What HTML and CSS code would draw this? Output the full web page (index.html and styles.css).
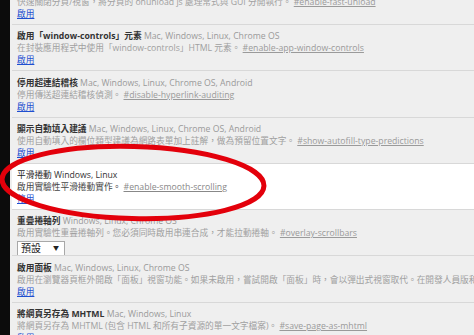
FILE: index.html
```html
<!DOCTYPE html>
<html lang="zh-Hant">
<head>
<meta charset="utf-8">
<link rel="stylesheet" href="styles.css">
</head>
<body>
<div class="page">
  <div class="strip"></div>
  <div class="list">
    <div class="exp">
      <div class="title"><span class="name">快速關閉分頁/視窗</span> <span class="plat">Mac, Windows, Linux, Chrome OS</span></div>
      <div class="desc">快速關閉分頁/視窗，將分頁的 onunload js 處理常式與 GUI 分開執行。 <a class="perm">#enable-fast-unload</a></div>
      <div class="act"><a class="link">啟用</a></div>
    </div>
    <div class="exp">
      <div class="title"><span class="name">啟用「window-controls」元素</span> <span class="plat">Mac, Windows, Linux, Chrome OS</span></div>
      <div class="desc">在封裝應用程式中使用「window-controls」HTML 元素。 <a class="perm">#enable-app-window-controls</a></div>
      <div class="act"><a class="link">啟用</a></div>
    </div>
    <div class="exp">
      <div class="title"><span class="name">停用超連結稽核</span> <span class="plat">Mac, Windows, Linux, Chrome OS, Android</span></div>
      <div class="desc">停用傳送超連結稽核偵測。 <a class="perm">#disable-hyperlink-auditing</a></div>
      <div class="act"><a class="link">啟用</a></div>
    </div>
    <div class="exp">
      <div class="title"><span class="name">顯示自動填入建議</span> <span class="plat">Mac, Windows, Linux, Chrome OS, Android</span></div>
      <div class="desc">使用自動填入的欄位類型建議為網路表單加上註解，做為預留位置文字。 <a class="perm">#show-autofill-type-predictions</a></div>
      <div class="act"><a class="link">啟用</a></div>
    </div>
    <div class="exp supported">
      <div class="title"><span class="name">平滑捲動</span> <span class="plat">Windows, Linux</span></div>
      <div class="desc">啟用實驗性平滑捲動實作。 <a class="perm">#enable-smooth-scrolling</a></div>
      <div class="act"><a class="link">停用</a></div>
    </div>
    <div class="exp">
      <div class="title"><span class="name">重疊捲軸列</span> <span class="plat">Windows, Linux, Chrome OS</span></div>
      <div class="desc">啟用實驗性重疊捲軸列。您必須同時啟用串連合成，才能拉動捲軸。 <a class="perm">#overlay-scrollbars</a></div>
      <div class="act"><span class="select"><span>預設</span><span class="arrow">▼</span></span></div>
    </div>
    <div class="exp">
      <div class="title"><span class="name">啟用面板</span> <span class="plat">Mac, Windows, Linux, Chrome OS</span></div>
      <div class="desc">啟用在瀏覽器頁框外開啟「面板」視窗功能。如果未啟用，嘗試開啟「面板」時，會以彈出式視窗取代。在開發人員版和測試版中，一律啟用「面板」。 <a class="perm">#enable-panels</a></div>
      <div class="act"><a class="link">啟用</a></div>
    </div>
    <div class="exp">
      <div class="title"><span class="name">將網頁另存為 MHTML</span> <span class="plat">Mac, Windows, Linux</span></div>
      <div class="desc">將網頁另存為 MHTML (包含 HTML 和所有子資源的單一文字檔案)。 <a class="perm">#save-page-as-mhtml</a></div>
      <div class="act"><a class="link">啟用</a></div>
    </div>
  </div>
</div>
<svg class="ring" width="474" height="335" viewBox="0 0 474 335">
  <ellipse cx="133" cy="182.5" rx="131" ry="36" transform="rotate(1.5 133 182.5)" fill="none" stroke="#e3000b" stroke-width="5"/>
</svg>
</body>
</html>
```

FILE: styles.css
```css
html, body {
  margin: 0;
  padding: 0;
  height: 100%;
  overflow: hidden;
}
body {
  background: #efefef;
  font-family: "Open Sans", "Noto Sans CJK TC", sans-serif;
  font-size: 8.7px;
  line-height: 12px;
  color: #333;
  position: relative;
}
.page {
  display: flex;
  height: 100%;
}
.strip {
  width: 10px;
  flex: none;
  background: #0c0c0c;
}
.list {
  flex: 1;
  margin-left: 2px;
  margin-top: -21.3px;
  overflow: hidden;
}
.exp {
  border-bottom: 1px solid #d8d8d8;
  padding: 5.3px 0 4px 5px;
  white-space: nowrap;
  overflow: hidden;
}
.exp.supported {
  background: #ffffff;
}
.title, .desc, .act {
  height: 12px;
}
.name {
  font-weight: bold;
  color: #333;
}
.plat {
  color: #9a9a9a;
}
.desc {
  color: #a0a0a0;
}
.perm {
  color: #9a9a9a;
  text-decoration: underline;
}
.link {
  color: #1f4fd0;
  text-decoration: underline;
}
.supported .name {
  font-weight: normal;
  color: #222;
}
.supported .plat {
  color: #333;
}
.supported .desc {
  color: #444;
}
.supported .perm {
  color: #888;
}
.act {
  display: flex;
  align-items: center;
}
.select {
  display: inline-flex;
  align-items: center;
  justify-content: space-between;
  box-sizing: border-box;
  width: 48px;
  height: 15px;
  margin-top: 6px;
  padding: 0 5px 0 3px;
  background: #fff;
  border: 1px solid #a8a8a8;
  color: #222;
  font-size: 10px;
}
.arrow {
  font-size: 6px;
}
.ring {
  position: absolute;
  left: 0;
  top: 0;
  pointer-events: none;
}
```
